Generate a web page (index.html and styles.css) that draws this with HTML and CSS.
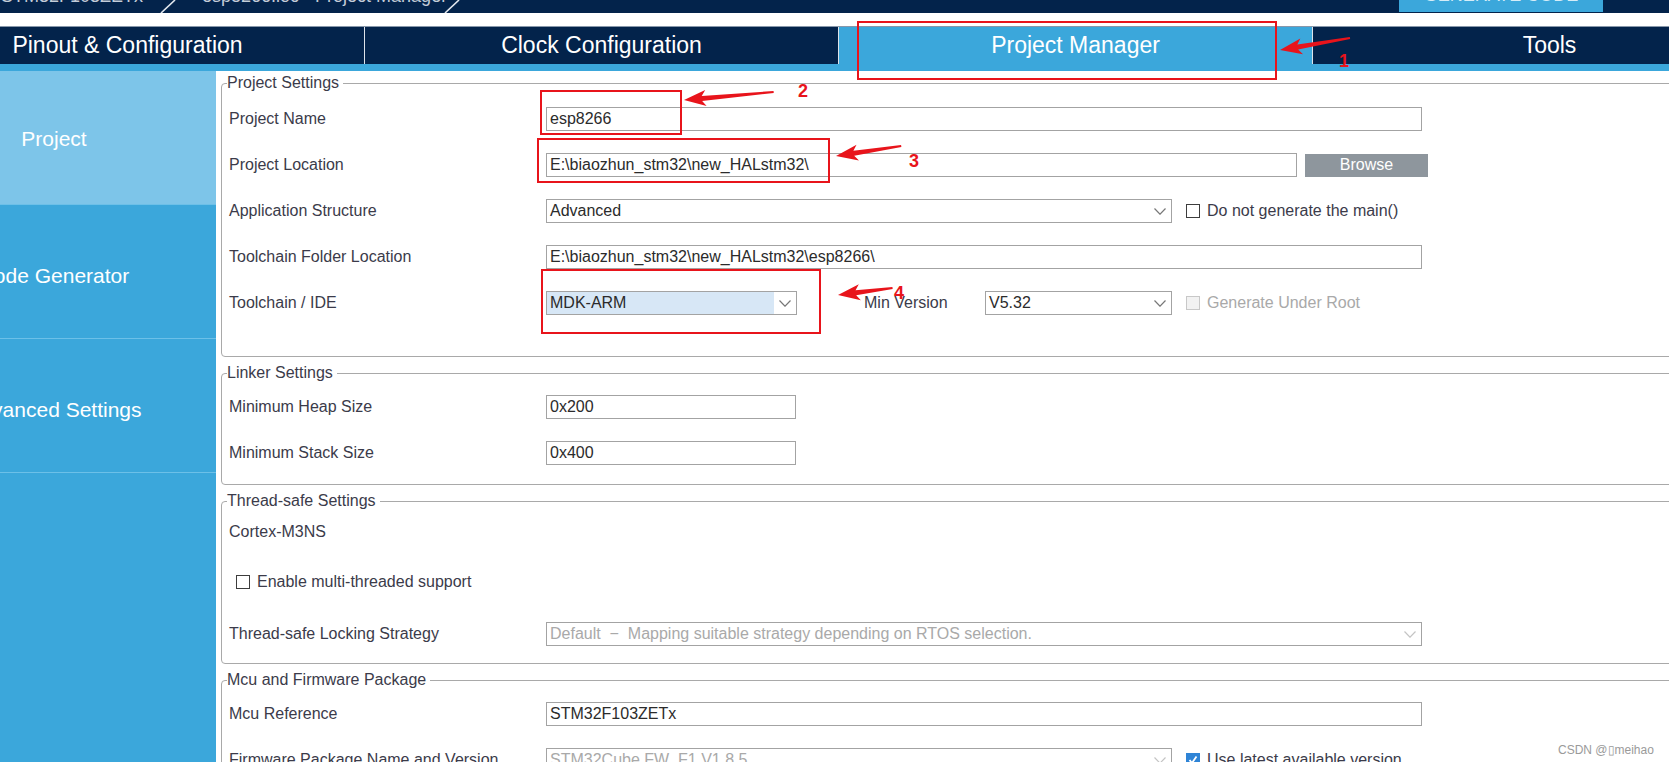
FILE: index.html
```html
<!DOCTYPE html>
<html lang="en">
<head>
    <meta charset="UTF-8">
    <meta name="viewport" content="width=device-width, initial-scale=1.0">
    <title>Project Manager</title>
    <link rel="stylesheet" href="styles.css">
</head>
<body>
    <div class="app">
        <header class="topbar">
            <span class="crumb crumb-first">STM32F103ZETx</span>
            <svg class="slash" width="16" height="13" viewBox="0 0 16 13"><line x1="1" y1="13" x2="15" y2="0" stroke="#e3e8ef" stroke-width="1.6"/></svg>
            <span class="crumb crumb-second">esp8266.ioc - Project Manager</span>
            <svg class="slash" width="16" height="13" viewBox="0 0 16 13"><line x1="1" y1="13" x2="15" y2="0" stroke="#e3e8ef" stroke-width="1.6"/></svg>
            <div class="generate"><span>GENERATE CODE</span></div>
        </header>

        <nav class="tabs">
            <div class="tab">Pinout &amp; Configuration</div>
            <div class="tab">Clock Configuration</div>
            <div class="tab active">Project Manager</div>
            <div class="tab">Tools</div>
        </nav>
        <div class="strip"></div>

        <div class="main">
            <aside class="sidebar">
                <div class="side-item selected"><div class="side-text">Project</div></div>
                <div class="side-item"><div class="side-text">Code Generator</div></div>
                <div class="side-item"><div class="side-text">Advanced Settings</div></div>
            </aside>

            <section class="content">
                <fieldset class="group group-project">
                    <legend>Project Settings</legend>
                    <div class="row">
                        <span class="label">Project Name</span>
                        <div class="input w-full">esp8266</div>
                    </div>
                    <div class="row">
                        <span class="label">Project Location</span>
                        <div class="input w-loc">E:\biaozhun_stm32\new_HALstm32\</div>
                        <div class="browse">Browse</div>
                    </div>
                    <div class="row">
                        <span class="label">Application Structure</span>
                        <div class="input select w-mid">
                            <span>Advanced</span>
                            <svg class="chev" width="12" height="7" viewBox="0 0 12 7"><polyline points="0.5,0.5 6,6.2 11.5,0.5" fill="none" stroke="#777" stroke-width="1.2"/></svg>
                        </div>
                        <label class="check-label"><span class="box"></span>Do not generate the main()</label>
                    </div>
                    <div class="row">
                        <span class="label">Toolchain Folder Location</span>
                        <div class="input w-full">E:\biaozhun_stm32\new_HALstm32\esp8266\</div>
                    </div>
                    <div class="row">
                        <span class="label">Toolchain / IDE</span>
                        <div class="input select ide w-ide">
                            <span class="value">MDK-ARM</span>
                            <span class="chev-cell"><svg class="chev" width="12" height="7" viewBox="0 0 12 7"><polyline points="0.5,0.5 6,6.2 11.5,0.5" fill="none" stroke="#777" stroke-width="1.2"/></svg></span>
                        </div>
                        <span class="min-label">Min Version</span>
                        <div class="input select w-ver">
                            <span>V5.32</span>
                            <svg class="chev" width="12" height="7" viewBox="0 0 12 7"><polyline points="0.5,0.5 6,6.2 11.5,0.5" fill="none" stroke="#777" stroke-width="1.2"/></svg>
                        </div>
                        <label class="check-label disabled"><span class="box off"></span>Generate Under Root</label>
                    </div>
                </fieldset>

                <fieldset class="group group-linker">
                    <legend>Linker Settings</legend>
                    <div class="row">
                        <span class="label">Minimum Heap Size</span>
                        <div class="input w-small">0x200</div>
                    </div>
                    <div class="row">
                        <span class="label">Minimum Stack Size</span>
                        <div class="input w-small">0x400</div>
                    </div>
                </fieldset>

                <fieldset class="group group-thread">
                    <legend>Thread-safe Settings</legend>
                    <div class="row row-cortex">
                        <span class="label">Cortex-M3NS</span>
                    </div>
                    <div class="row row-check">
                        <label class="check-label first"><span class="box"></span>Enable multi-threaded support</label>
                    </div>
                    <div class="row row-lock">
                        <span class="label">Thread-safe Locking Strategy</span>
                        <div class="input select w-full disabled">
                            <span>Default&nbsp; &minus; &nbsp;Mapping suitable strategy depending on RTOS selection.</span>
                            <svg class="chev" width="12" height="7" viewBox="0 0 12 7"><polyline points="0.5,0.5 6,6.2 11.5,0.5" fill="none" stroke="#c4c4c4" stroke-width="1.2"/></svg>
                        </div>
                    </div>
                </fieldset>

                <fieldset class="group group-mcu">
                    <legend>Mcu and Firmware Package</legend>
                    <div class="row">
                        <span class="label">Mcu Reference</span>
                        <div class="input w-full">STM32F103ZETx</div>
                    </div>
                    <div class="row">
                        <span class="label">Firmware Package Name and Version</span>
                        <div class="input select w-mid disabled">
                            <span>STM32Cube FW_F1 V1.8.5</span>
                            <svg class="chev" width="12" height="7" viewBox="0 0 12 7"><polyline points="0.5,0.5 6,6.2 11.5,0.5" fill="none" stroke="#c4c4c4" stroke-width="1.2"/></svg>
                        </div>
                        <label class="check-label"><span class="box on"><svg width="10" height="10" viewBox="0 0 10 10"><polyline points="1.5,5 4,8 8.5,1.5" fill="none" stroke="#fff" stroke-width="1.8"/></svg></span>Use latest available version</label>
                    </div>
                </fieldset>
            </section>
        </div>

        <svg class="marks" width="1669" height="762" viewBox="0 0 1669 762">
            <g fill="none" stroke="#e8141b" stroke-width="2">
                <rect x="858" y="22" width="418" height="57"/>
                <rect x="541" y="91" width="140" height="43"/>
                <rect x="538" y="139" width="291" height="43"/>
                <rect x="542" y="270" width="278" height="63"/>
            </g>
            <g fill="#e8141b">
                <path transform="translate(1280 50) rotate(-9.7)" d="M0 0 L22 -8 L18 -2.5 L71 -1 L71 1 L18 2.5 L22 8 Z"/>
                <path transform="translate(684 100) rotate(-5.1)" d="M0 0 L22 -8 L18 -2.5 L90 -1 L90 1 L18 2.5 L22 8 Z"/>
                <path transform="translate(836 156) rotate(-8.8)" d="M0 0 L22 -8 L18 -2.5 L66 -1 L66 1 L18 2.5 L22 8 Z"/>
                <path transform="translate(838 295) rotate(-7.3)" d="M0 0 L22 -8 L18 -2.5 L55 -1 L55 1 L18 2.5 L22 8 Z"/>
            </g>
            <g class="mark-num" fill="#e8141b">
                <text x="1339" y="67">1</text>
                <text x="798" y="97">2</text>
                <text x="909" y="167">3</text>
                <text x="894" y="299">4</text>
            </g>
        </svg>
        <div class="watermark">CSDN @&#9647;meihao</div>
    </div>
</body>
</html>
```

FILE: styles.css
```css
* {
    box-sizing: border-box;
}

body {
    margin: 0;
    width: 1669px;
    height: 762px;
    overflow: hidden;
    background-color: #fff;
    font-family: "Liberation Sans", Arial, sans-serif;
}

.app {
    position: relative;
    width: 1669px;
    height: 762px;
    overflow: hidden;
}

/* top breadcrumb bar, mostly scrolled out of view */
.topbar {
    display: flex;
    height: 13px;
    margin-bottom: 13px;
    overflow: hidden;
    background-color: #03234b;
}

.crumb {
    flex: none;
    margin-top: -14px;
    font-size: 18px;
    line-height: 20px;
    color: #c3ccd8;
    white-space: nowrap;
}

.crumb-first {
    width: 160px;
    padding-left: 1px;
}

.crumb-second {
    width: 242px;
    margin-left: 26px;
}

.slash {
    flex: none;
}

.generate {
    flex: none;
    width: 204px;
    height: 12px;
    margin-left: auto;
    margin-right: 66px;
    overflow: hidden;
    background-color: #3ba7db;
    color: #d6edf8;
    font-size: 18px;
    line-height: 20px;
    text-align: center;
}

.generate span {
    display: block;
    margin-top: -15px;
}

/* main tabs */
.tabs {
    display: flex;
    height: 38px;
    margin-left: -110px;
    border-top: 1px solid #8797aa;
    background-color: #03234b;
}

.tab {
    flex: none;
    width: 474px;
    display: flex;
    align-items: center;
    justify-content: center;
    border-left: 1px solid #dde3ea;
    color: #fff;
    font-size: 23px;
    white-space: nowrap;
}

.tab.active {
    background-color: #3ba7db;
}

.strip {
    height: 7px;
    background-color: #3ba7db;
}

.main {
    display: flex;
    height: 691px;
}

/* left menu */
.sidebar {
    flex: none;
    width: 216px;
    overflow: hidden;
    background-color: #3ba7db;
}

.side-item {
    height: 134px;
    display: flex;
    align-items: center;
    padding-top: 9px;
    border-bottom: 1px solid #6cc0e8;
    color: #fff;
    font-size: 21px;
}

.side-item.selected {
    padding-top: 3px;
    background-color: #7dc5e9;
}

.side-text {
    flex: none;
    width: 108px;
    display: flex;
    justify-content: center;
    white-space: nowrap;
}

/* settings panel */
.content {
    flex: 1;
    min-width: 0;
    overflow: hidden;
    padding: 3px 0 0 5px;
}

.group {
    min-width: 0;
    margin: 0 -20px 7px 0;
    padding: 2px 0 0 7px;
    border: 1px solid #a9a9a9;
    border-radius: 4px 0 0 4px;
}

.group legend {
    margin-left: -2px;
    padding: 0 4px 0 0;
    font-size: 16px;
    line-height: 18px;
    color: #3b3b4a;
}

.group-project {
    padding-top: 4px;
    padding-bottom: 30px;
}

.group-linker {
    padding-bottom: 8px;
}

.group-thread {
    padding-bottom: 7px;
}

.row {
    display: flex;
    align-items: center;
    height: 46px;
    font-size: 16px;
    color: #3b3b4a;
}

.row-cortex {
    height: 40px;
}

.row-check {
    height: 60px;
}

.row-lock {
    height: 44px;
}

.label {
    flex: none;
    width: 317px;
    white-space: nowrap;
}

.input {
    flex: none;
    height: 24px;
    display: flex;
    align-items: center;
    padding: 0 3px;
    overflow: hidden;
    border: 1px solid #a3a3a3;
    background-color: #fff;
    color: #2b2b2b;
    white-space: nowrap;
}

.w-full {
    width: 876px;
}

.w-loc {
    width: 751px;
}

.w-mid {
    width: 626px;
}

.w-ide {
    width: 251px;
}

.w-ver {
    width: 187px;
}

.w-small {
    width: 250px;
}

.select {
    justify-content: space-between;
    padding-right: 5px;
}

.chev {
    flex: none;
}

.select.ide {
    padding: 0;
}

.ide .value {
    flex: 1;
    height: 100%;
    display: flex;
    align-items: center;
    padding-left: 3px;
    background-color: #d7e7f6;
}

.ide .chev-cell {
    flex: none;
    width: 22px;
    display: flex;
    justify-content: center;
}

.disabled {
    color: #a9a9a9;
}

.browse {
    flex: none;
    width: 123px;
    height: 23px;
    margin-left: 8px;
    display: flex;
    align-items: center;
    justify-content: center;
    background-color: #8e969d;
    color: #fff;
}

.min-label {
    flex: none;
    width: 121px;
    margin-left: 67px;
}

.check-label {
    display: flex;
    align-items: center;
    margin-left: 14px;
    white-space: nowrap;
}

.check-label.first {
    margin-left: 7px;
}

.box {
    flex: none;
    width: 14px;
    height: 14px;
    margin-right: 7px;
    border: 1px solid #3d3d3d;
    background-color: #fff;
}

.box.off {
    border-color: #c8c8c8;
    background-color: #f2f2f2;
}

.box.on {
    display: flex;
    align-items: center;
    justify-content: center;
    border-color: #2f84d6;
    background-color: #2f84d6;
}

/* red annotations drawn over the screenshot */
.marks {
    position: absolute;
    top: 0;
    left: 0;
    pointer-events: none;
}

.mark-num {
    font-family: "Liberation Sans", Arial, sans-serif;
    font-size: 18px;
    font-weight: bold;
}

.watermark {
    position: absolute;
    left: 1558px;
    top: 743px;
    font-size: 12px;
    color: #9a9a9a;
    white-space: nowrap;
}
```
